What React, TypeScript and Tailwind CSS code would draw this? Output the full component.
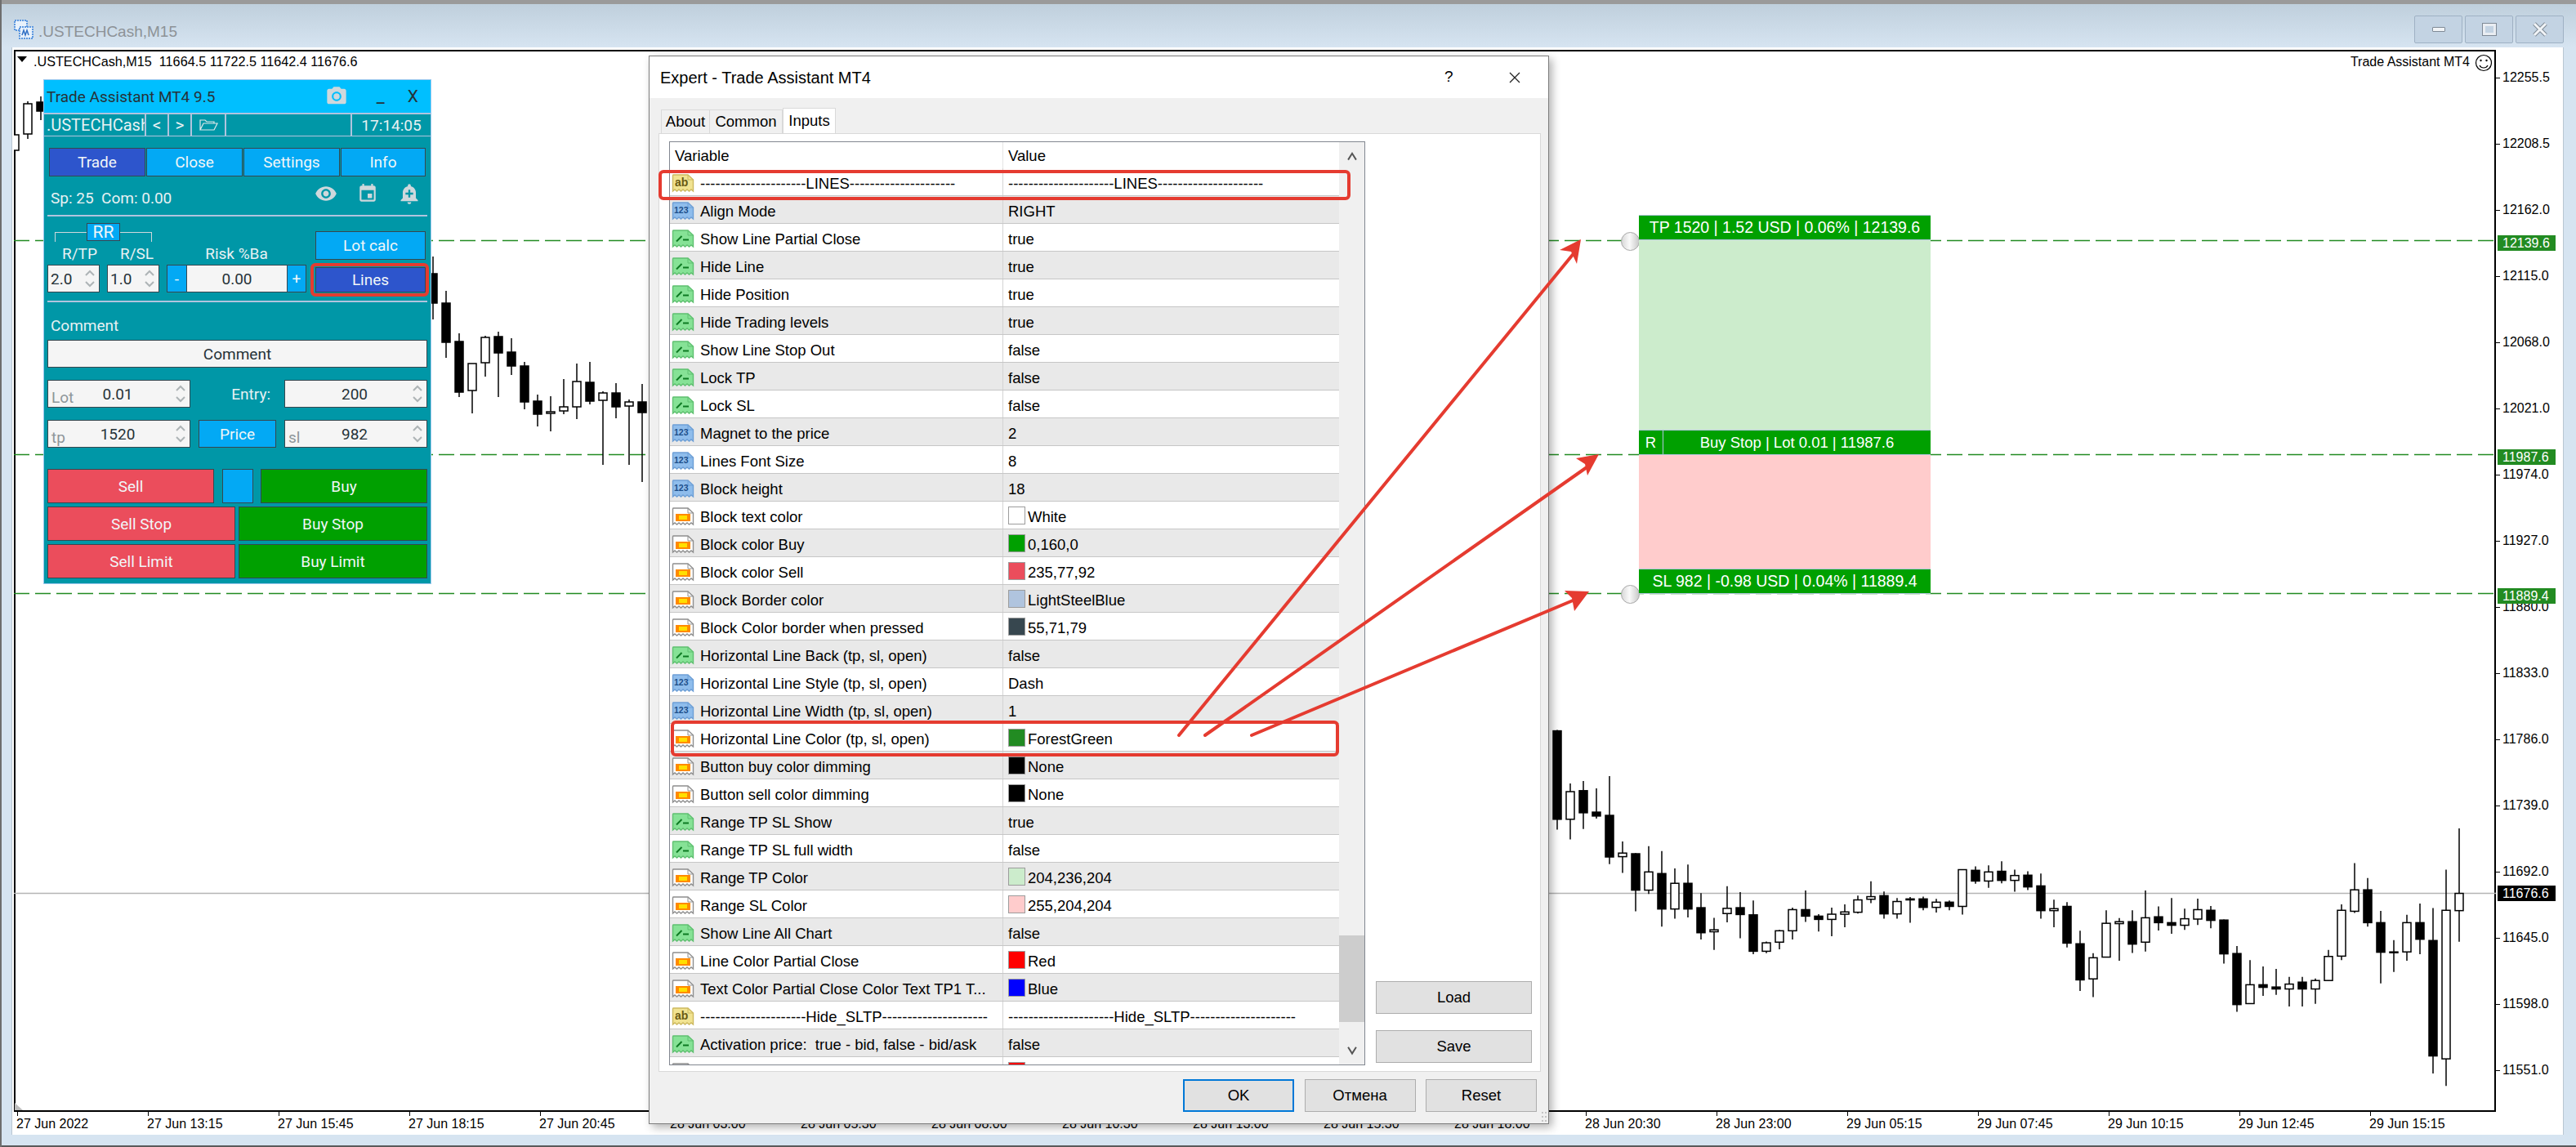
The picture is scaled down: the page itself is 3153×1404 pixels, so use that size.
import type { ReactNode } from 'react'

// candle samples taken from the chart right of the dialog: [isBlack, bodyTop, bodyBottom, wickTop, wickBottom]
const rightCandles: [number, number, number, number, number][] = [
  [1, 288, 560, 285, 592], [0, 475, 560, 450, 622], [1, 472, 540, 442, 590], [1, 538, 550, 465, 558],
  [1, 548, 676, 427, 698], [0, 664, 675, 628, 725], [1, 666, 778, 664, 843], [0, 722, 778, 643, 790],
  [1, 727, 836, 658, 890], [0, 757, 836, 711, 866], [1, 757, 836, 699, 862], [1, 832, 909, 787, 930],
  [0, 900, 906, 863, 962], [0, 834, 850, 766, 877], [1, 832, 853, 784, 926], [1, 854, 966, 810, 975],
  [0, 940, 966, 936, 972], [0, 903, 938, 900, 960], [0, 838, 903, 832, 930], [1, 838, 858, 779, 876],
  [1, 858, 868, 852, 905], [0, 852, 868, 832, 920], [0, 845, 852, 822, 892], [0, 808, 846, 795, 850],
  [0, 798, 806, 751, 818], [1, 795, 851, 782, 866], [0, 813, 851, 802, 866], [1, 805, 808, 799, 878],
  [1, 805, 831, 798, 840], [0, 815, 831, 805, 847], [1, 815, 828, 810, 840], [0, 715, 828, 715, 853],
  [1, 717, 750, 705, 758], [0, 722, 750, 702, 771], [1, 720, 748, 689, 757], [0, 733, 748, 715, 783],
  [1, 732, 768, 720, 778], [1, 765, 841, 727, 866], [0, 835, 841, 807, 892], [1, 828, 941, 815, 954],
  [1, 943, 1054, 903, 1088], [0, 986, 1051, 972, 1107], [0, 880, 984, 840, 985], [0, 875, 881, 864, 995],
  [1, 875, 944, 840, 971], [0, 863, 938, 779, 967], [1, 860, 878, 828, 902], [1, 878, 886, 802, 912],
  [0, 866, 886, 835, 900], [0, 838, 867, 804, 885], [1, 840, 871, 827, 895], [1, 870, 974, 868, 1004],
  [1, 973, 1130, 950, 1152], [0, 1069, 1127, 993, 1127], [1, 1069, 1077, 1013, 1103], [1, 1076, 1082, 1020, 1100],
  [0, 1067, 1082, 1045, 1136], [1, 1061, 1082, 1045, 1136], [0, 1056, 1082, 1050, 1128], [0, 982, 1056, 962, 1058],
  [0, 840, 981, 822, 993], [0, 777, 843, 695, 848], [1, 777, 878, 741, 890], [1, 878, 969, 842, 1065],
  [0, 968, 969, 932, 1030], [0, 878, 968, 854, 995], [1, 878, 929, 819, 975], [1, 933, 1288, 833, 1342],
  [0, 840, 1297, 715, 1380], [0, 788, 841, 588, 937],
]

// [x, isBlack, bodyTop, bodyBottom, wickTop, wickBottom] in page pixels
const leftCandles: [number, number, number, number, number, number][] = [
  [18, 0, 165, 184, 149, 186], [34, 0, 127, 164, 124, 170], [50, 1, 125, 136, 118, 147],
  [530, 1, 335, 371, 314, 391], [546, 1, 371, 419, 356, 438], [562, 1, 418, 480, 408, 486],
  [578, 0, 445, 478, 445, 506], [594, 0, 413, 444, 411, 461], [610, 1, 412, 432, 406, 486],
  [626, 1, 431, 448, 414, 459], [642, 1, 448, 492, 443, 501], [658, 1, 491, 507, 483, 522],
  [674, 0, 504, 506, 485, 528], [690, 0, 498, 503, 464, 507], [706, 0, 467, 498, 445, 513],
  [722, 1, 468, 491, 443, 495], [738, 0, 481, 490, 479, 569], [754, 1, 481, 498, 469, 512],
  [770, 0, 492, 497, 489, 569], [786, 1, 492, 505, 470, 590],
]

const candles = [
  ...leftCandles,
  ...rightCandles.map(
    ([black, bt, bb, wt, wb], i) =>
      [1906 + i * 16, black, 780 + bt / 2.513, 780 + bb / 2.513, 780 + wt / 2.513, 780 + wb / 2.513] as [number, number, number, number, number, number],
  ),
]

const priceTicks = [
  ['12255.5', 95], ['12208.5', 176], ['12162.0', 257], ['12115.0', 338], ['12068.0', 419], ['12021.0', 500],
  ['11974.0', 581], ['11927.0', 662], ['11880.0', 743], ['11833.0', 824], ['11786.0', 905], ['11739.0', 986],
  ['11692.0', 1067], ['11645.0', 1148], ['11598.0', 1229], ['11551.0', 1310],
] as const

const priceTags = [
  { label: '12139.6', top: 288, cls: 'bg-[#228b22]' },
  { label: '11987.6', top: 550, cls: 'bg-[#228b22]' },
  { label: '11889.4', top: 720, cls: 'bg-[#228b22]' },
  { label: '11676.6', top: 1084, cls: 'bg-black' },
]

const timeLabels = [
  '27 Jun 2022', '27 Jun 13:15', '27 Jun 15:45', '27 Jun 18:15', '27 Jun 20:45', '28 Jun 03:00', '28 Jun 05:30',
  '28 Jun 08:00', '28 Jun 10:30', '28 Jun 13:00', '28 Jun 15:30', '28 Jun 18:00', '28 Jun 20:30', '28 Jun 23:00',
  '29 Jun 05:15', '29 Jun 07:45', '29 Jun 10:15', '29 Jun 12:45', '29 Jun 15:15',
]

type IconKind = 'ab' | 'num' | 'bool' | 'color'

const rows: { name: string; value: string; icon: IconKind; swatch?: string }[] = [
  { name: '---------------------LINES---------------------', value: '---------------------LINES---------------------', icon: 'ab' },
  { name: 'Align Mode', value: 'RIGHT', icon: 'num' },
  { name: 'Show Line Partial Close', value: 'true', icon: 'bool' },
  { name: 'Hide Line', value: 'true', icon: 'bool' },
  { name: 'Hide Position', value: 'true', icon: 'bool' },
  { name: 'Hide Trading levels', value: 'true', icon: 'bool' },
  { name: 'Show Line Stop Out', value: 'false', icon: 'bool' },
  { name: 'Lock TP', value: 'false', icon: 'bool' },
  { name: 'Lock SL', value: 'false', icon: 'bool' },
  { name: 'Magnet to the price', value: '2', icon: 'num' },
  { name: 'Lines Font Size', value: '8', icon: 'num' },
  { name: 'Block height', value: '18', icon: 'num' },
  { name: 'Block text color', value: 'White', icon: 'color', swatch: '#ffffff' },
  { name: 'Block color Buy', value: '0,160,0', icon: 'color', swatch: '#00a000' },
  { name: 'Block color Sell', value: '235,77,92', icon: 'color', swatch: '#eb4d5c' },
  { name: 'Block Border color', value: 'LightSteelBlue', icon: 'color', swatch: '#b0c4de' },
  { name: 'Block Color border when pressed', value: '55,71,79', icon: 'color', swatch: '#37474f' },
  { name: 'Horizontal Line Back (tp, sl, open)', value: 'false', icon: 'bool' },
  { name: 'Horizontal Line Style (tp, sl, open)', value: 'Dash', icon: 'num' },
  { name: 'Horizontal Line Width (tp, sl, open)', value: '1', icon: 'num' },
  { name: 'Horizontal Line Color (tp, sl, open)', value: 'ForestGreen', icon: 'color', swatch: '#228b22' },
  { name: 'Button buy color dimming', value: 'None', icon: 'color', swatch: '#000000' },
  { name: 'Button sell color dimming', value: 'None', icon: 'color', swatch: '#000000' },
  { name: 'Range TP SL Show', value: 'true', icon: 'bool' },
  { name: 'Range TP SL full width', value: 'false', icon: 'bool' },
  { name: 'Range TP Color', value: '204,236,204', icon: 'color', swatch: '#ccecCC' },
  { name: 'Range SL Color', value: '255,204,204', icon: 'color', swatch: '#ffcccc' },
  { name: 'Show Line All Chart', value: 'false', icon: 'bool' },
  { name: 'Line Color Partial Close', value: 'Red', icon: 'color', swatch: '#ff0000' },
  { name: 'Text Color Partial Close Color Text TP1 T...', value: 'Blue', icon: 'color', swatch: '#0000ff' },
  { name: '---------------------Hide_SLTP---------------------', value: '---------------------Hide_SLTP---------------------', icon: 'ab' },
  { name: 'Activation price:  true - bid, false - bid/ask', value: 'false', icon: 'bool' },
  { name: '', value: '', icon: 'color', swatch: '#ff0000' },
]

function RowIcon({ kind }: { kind: IconKind }) {
  const page = 'M2 1H20L26.5 7V21L24 19 21.5 21 19 19 16.5 21 14 19 11.5 21 9 19 6.5 21 4 19 1.5 21V2Z'
  const fill = { ab: '#f1e391', num: '#8fbdec', bool: '#86e296', color: '#ffffff' }[kind]
  const stroke = { ab: '#cdb95f', num: '#6d9fd6', bool: '#5fc070', color: '#8f8f8f' }[kind]
  return (
    <svg width="28" height="24" viewBox="0 0 28 24" className="mt-[4px] shrink-0">
      <path d={page} fill={fill} stroke={stroke} strokeWidth="1.4" />
      <path d="M20 1V7H26.5" fill="none" stroke={stroke} strokeWidth="1" />
      {kind === 'ab' && (
        <text x="4" y="14.5" fontSize="14" fontWeight="700" fill="#6a5a14" fontFamily="Liberation Sans, sans-serif">ab</text>
      )}
      {kind === 'num' && (
        <text x="3" y="14" fontSize="10.5" fontWeight="700" fill="#1d4f8a" fontFamily="Liberation Sans, sans-serif">123</text>
      )}
      {kind === 'bool' && <path d="M6 14.5L12.5 8M14 12.5H21" fill="none" stroke="#0d7a22" strokeWidth="2" />}
      {kind === 'color' && (
        <>
          <rect x="5" y="8" width="18" height="9" fill="#ff8a00" />
          <rect x="9" y="10" width="10" height="5" fill="#ffdf00" />
        </>
      )}
    </svg>
  )
}

function GridRow({ row, index }: { row: (typeof rows)[number]; index: number }) {
  return (
    <div className={`flex h-[34px] shrink-0 border-b border-[#c6c6c6] ${index % 2 ? 'bg-[#e9e9e9]' : 'bg-white'}`}>
      <div className="flex w-[408px] items-center gap-[7px] border-r border-[#d4d4d4] pl-[2px] whitespace-pre">
        <RowIcon kind={row.icon} />
        <span className="pt-[4px]">{row.name}</span>
      </div>
      <div className="flex flex-1 items-center pl-[6px] whitespace-pre">
        {row.swatch && (
          <span className="mr-[3px] h-[22px] w-[21px] shrink-0 border border-[#9c9c9c]" style={{ backgroundColor: row.swatch }} />
        )}
        <span className="pt-[4px]">{row.value}</span>
      </div>
    </div>
  )
}

function DialogButton({ children, active }: { children: ReactNode; active?: boolean }) {
  return (
    <div className={`flex h-[40px] w-[136px] items-center justify-center bg-[#e1e1e1] ${active ? 'border-2 border-[#0078d7]' : 'border border-[#adadad]'}`}>
      {children}
    </div>
  )
}

function Dialog() {
  return (
    <div className="absolute top-[68px] left-[794px] flex h-[1308px] w-[1102px] flex-col border border-[#7d7d7d] bg-[#f0f0f0] font-['Liberation_Sans',sans-serif] text-[18.5px] text-black shadow-[4px_4px_10px_rgba(0,0,0,0.3)]">
      <div className="flex h-[51px] items-center bg-white pl-[13px] text-[20px]">
        <span>Expert - Trade Assistant MT4</span>
        <span className="ml-[702px] text-[19px]">?</span>
        <svg width="14" height="14" viewBox="0 0 14 14" className="ml-[69px]">
          <path d="M1 1L13 13M13 1L1 13" stroke="#222" strokeWidth="1.3" />
        </svg>
      </div>
      <div className="flex h-[43px] items-end pl-[14px]">
        <div className="flex h-[29px] w-[60px] items-center justify-center border border-b-0 border-[#d9d9d9]">About</div>
        <div className="flex h-[29px] w-[89px] items-center justify-center border border-b-0 border-l-0 border-[#d9d9d9]">Common</div>
        <div className="flex h-[31px] w-[65px] items-center justify-center border border-b-0 border-[#d9d9d9] bg-white">Inputs</div>
      </div>
      <div className="mr-[9px] ml-[11px] flex h-[1149px] border border-[#d9d9d9] bg-white pt-[9px] pl-[12px]">
        <div className="flex h-[1131px] w-[852px] border border-[#828790]">
          <div className="flex w-[819px] flex-col overflow-hidden">
            <div className="flex h-[32px] shrink-0 bg-white">
              <div className="flex w-[408px] items-center border-r border-[#e5e5e5] pt-[2px] pl-[6px]">Variable</div>
              <div className="flex flex-1 items-center pt-[2px] pl-[6px]">Value</div>
            </div>
            {rows.map((row, i) => (
              <GridRow key={i} row={row} index={i} />
            ))}
          </div>
          <div className="flex flex-1 flex-col items-center bg-[#f0f0f0]">
            <svg width="14" height="36" viewBox="0 0 14 36">
              <path d="M2 22L7 14L12 22" fill="none" stroke="#555" strokeWidth="2" />
            </svg>
            <div className="mt-[936px] h-[107px] w-full bg-[#cdcdcd]" />
            <svg width="14" height="36" viewBox="0 0 14 36" className="mt-[17px]">
              <path d="M2 14L7 22L12 14" fill="none" stroke="#555" strokeWidth="2" />
            </svg>
          </div>
        </div>
        <div className="ml-[13px] flex w-[191px] flex-col justify-end gap-[20px] pb-[10px]">
          <div className="flex h-[40px] items-center justify-center border border-[#adadad] bg-[#e1e1e1]">Load</div>
          <div className="flex h-[40px] items-center justify-center border border-[#adadad] bg-[#e1e1e1]">Save</div>
        </div>
      </div>
      <div className="flex flex-1 items-start justify-end gap-[12.5px] pt-[9px] pr-[14px]">
        <DialogButton active>OK</DialogButton>
        <DialogButton>Отмена</DialogButton>
        <DialogButton>Reset</DialogButton>
      </div>
      <svg width="8" height="14" viewBox="0 0 8 14" className="absolute right-[1px] bottom-[1px]">
        <path d="M1 1h2v2H1zM5 1h2v2H5zM1 6h2v2H1zM5 6h2v2H5zM1 11h2v2H1zM5 11h2v2H5z" fill="#c4c4c4" />
      </svg>
    </div>
  )
}

function Chevrons() {
  return (
    <svg width="14" height="26" viewBox="0 0 14 26" className="shrink-0">
      <path d="M2 9L7 4L12 9M2 17L7 22L12 17" fill="none" stroke="#aeb4b6" strokeWidth="2" />
    </svg>
  )
}

function Spin({ value, hint, className }: { value: string; hint?: string; className: string }) {
  return (
    <div className={`relative flex h-[34px] items-center border border-[#37474f] bg-[#f5f5f5] pr-[4px] text-[#263238] ${className}`}>
      {hint && <span className="absolute bottom-[2px] left-[4px] text-[#8e9699]">{hint}</span>}
      <span className={`flex-1 ${hint !== undefined ? 'pl-[15px] text-center' : 'pl-[3px]'}`}>{value}</span>
      <Chevrons />
    </div>
  )
}

function Btn({ children, className }: { children?: ReactNode; className: string }) {
  return <div className={`flex items-center justify-center border border-[#37474f] text-[#f1f6f8] ${className}`}>{children}</div>
}

function TradePanel() {
  return (
    <div className="absolute top-[97px] left-[53px] flex h-[618px] w-[475px] flex-col border border-[#9cc8ee] bg-[#0097a7] font-['Roboto',sans-serif] text-[19px] leading-none text-[#e8f1f3]">
      <div className="flex h-[40px] shrink-0 items-center bg-[#00bfff] pl-[3px] text-[#263238]">
        <span className="flex-1">Trade Assistant MT4 9.5</span>
        <svg width="28" height="28" viewBox="0 0 24 24" fill="#cfd8dc" className="mr-[35px]">
          <path d="M12 15.2a3.2 3.2 0 1 0 0-6.4 3.2 3.2 0 0 0 0 6.4z" />
          <path d="M9 2L7.17 4H4c-1.1 0-2 .9-2 2v12c0 1.100.9 2 2 2h16c1.100 0 2-.9 2-2V6c0-1.100-.9-2-2-2h-3.170L15 2H9zm3 15c-2.760 0-5-2.240-5-5s2.240-5 5-5 5 2.240 5 5-2.240 5-5 5z" />
        </svg>
        <span className="mr-[27px] w-[11px] text-[22px]">_</span>
        <span className="mr-[15px] text-[21px]">X</span>
      </div>
      <div className="flex h-[29px] shrink-0 border-t-2 border-b border-[#b0c4de]">
        <div className="w-[125px] overflow-hidden border-r-2 border-[#b0c4de] pt-[3px] pl-[3px] text-[20px] whitespace-nowrap">.USTECHCash</div>
        <div className="flex w-[28px] items-center justify-center border-r-2 border-[#b0c4de] text-[21px]">&lt;</div>
        <div className="flex w-[28px] items-center justify-center border-r-2 border-[#b0c4de] text-[21px]">&gt;</div>
        <div className="flex w-[42px] items-center justify-center border-r-2 border-[#b0c4de]">
          <svg width="24" height="16" viewBox="0 0 24 16" fill="none" stroke="#dfe8ea" strokeWidth="1.2">
            <path d="M2 14V2H8L10 4H19V6M2 14L6 6H23L19 14Z" />
          </svg>
        </div>
        <div className="w-[154px] border-r-2 border-[#b0c4de]" />
        <div className="flex flex-1 items-center justify-center">17:14:05</div>
      </div>
      <div className="mt-[14px] flex gap-px pl-[6px]">
        <Btn className="h-[35px] w-[118px] bg-[#2d55cc]">Trade</Btn>
        <Btn className="h-[35px] w-[118px] bg-[#03a9f4]">Close</Btn>
        <Btn className="h-[35px] w-[118px] bg-[#03a9f4]">Settings</Btn>
        <Btn className="h-[35px] w-[104px] bg-[#03a9f4]">Info</Btn>
      </div>
      <div className="flex h-[47px] shrink-0 items-center pr-[12px] pl-[8px]">
        <span className="pt-[5px] whitespace-pre">Sp: 25  Com: 0.00</span>
        <div className="ml-auto flex items-center gap-[24px] pb-[6px]">
          <svg width="28" height="28" viewBox="0 0 24 24" fill="#cfd8dc">
            <path d="M12 4.500C7 4.500 2.730 7.610 1 12c1.730 4.390 6 7.500 11 7.500s9.270-3.110 11-7.500c-1.730-4.390-6-7.500-11-7.500zM12 17c-2.760 0-5-2.240-5-5s2.240-5 5-5 5 2.240 5 5-2.240 5-5 5zm0-8c-1.660 0-3 1.340-3 3s1.340 3 3 3 3-1.340 3-3-1.340-3-3-3z" />
          </svg>
          <svg width="26" height="26" viewBox="0 0 24 24" fill="#cfd8dc">
            <path d="M17 12h-5v5h5v-5zM16 1v2H8V1H6v2H5c-1.110 0-1.990.9-1.990 2L3 19c0 1.100.89 2 2 2h14c1.100 0 2-.9 2-2V5c0-1.100-.9-2-2-2h-1V1h-2zm3 18H5V8h14v11z" />
          </svg>
          <svg width="28" height="28" viewBox="0 0 24 24" fill="#cfd8dc">
            <path d="M10.010 21.010c0 1.100.89 1.990 1.990 1.990s1.990-.89 1.990-1.990h-3.980zm8.870-4.190V11c0-3.250-2.250-5.970-5.290-6.690v-.72C13.590 2.710 12.880 2 12 2s-1.590.71-1.590 1.590v.72C7.370 5.030 5.120 7.750 5.120 11v5.820L3 18.940V20h18v-1.060l-2.120-2.120zM16 13.010h-3v3h-2v-3H8V11h3V8h2v3h3v2.010z" />
          </svg>
        </div>
      </div>
      <div className="mx-[4px] h-[2px] shrink-0 bg-[#b0c4de]" />
      <div className="flex h-[103px] shrink-0 px-[4px]">
        <div className="w-[317px] pt-[8px]">
          <div className="flex h-[24px] pl-[9px]">
            <div className="mt-[11px] h-[12px] w-[39px] border-t border-l border-[#cfd8dc]" />
            <Btn className="h-[22px] w-[41px] bg-[#03a9f4] text-[21px]">RR</Btn>
            <div className="mt-[11px] h-[12px] w-[39px] border-t border-r border-[#cfd8dc]" />
          </div>
          <div className="flex h-[27px] items-center">
            <span className="w-[73px] pl-[6px] text-center">R/TP</span>
            <span className="w-[73px] text-center">R/SL</span>
            <span className="w-[171px] text-center">Risk %Ba</span>
          </div>
          <div className="flex gap-[9px]">
            <Spin value="2.0" className="w-[64px]" />
            <Spin value="1.0" className="w-[64px]" />
            <div className="flex h-[34px] w-[171px]">
              <Btn className="w-[25px] bg-[#03a9f4]">-</Btn>
              <div className="flex w-[122px] items-center justify-center border-y border-[#37474f] bg-[#f5f5f5] text-[#263238]">0.00</div>
              <Btn className="w-[24px] bg-[#03a9f4]">+</Btn>
            </div>
          </div>
        </div>
        <div className="ml-[11px] flex w-[135px] flex-col pt-[18px]">
          <Btn className="h-[35px] bg-[#03a9f4]">Lot calc</Btn>
          <Btn className="mt-[9px] h-[31px] bg-[#2d55cc]">Lines</Btn>
        </div>
      </div>
      <div className="mx-[4px] h-[2px] shrink-0 bg-[#b0c4de]" />
      <div className="flex h-[46px] shrink-0 items-end px-[8px] pb-[8px]">Comment</div>
      <div className="mx-[4px] flex flex-col gap-[15px]">
        <div className="flex h-[34px] items-center justify-center border border-[#37474f] bg-[#f5f5f5] text-[#263238]">Comment</div>
        <div className="flex items-center">
          <Spin hint="Lot" value="0.01" className="w-[175px]" />
          <span className="w-[115px] pr-[17px] text-right">Entry:</span>
          <Spin hint="" value="200" className="w-[175px]" />
        </div>
        <div className="flex items-center">
          <Spin hint="tp" value="1520" className="w-[175px]" />
          <Btn className="mx-[10px] h-[34px] w-[95px] bg-[#03a9f4]">Price</Btn>
          <Spin hint="sl" value="982" className="w-[175px]" />
        </div>
      </div>
      <div className="mx-[4px] mt-[26px] flex flex-col gap-[4px]">
        <div className="flex justify-between">
          <Btn className="h-[42px] w-[204px] bg-[#eb4d5c]">Sell</Btn>
          <Btn className="h-[42px] w-[38px] bg-[#03a9f4]" />
          <Btn className="h-[42px] w-[204px] bg-[#00a000]">Buy</Btn>
        </div>
        <div className="flex justify-between">
          <Btn className="h-[42px] w-[230px] bg-[#eb4d5c]">Sell Stop</Btn>
          <Btn className="h-[42px] w-[231px] bg-[#00a000]">Buy Stop</Btn>
        </div>
        <div className="flex justify-between">
          <Btn className="h-[42px] w-[230px] bg-[#eb4d5c]">Sell Limit</Btn>
          <Btn className="h-[42px] w-[231px] bg-[#00a000]">Buy Limit</Btn>
        </div>
      </div>
    </div>
  )
}

function LineBlock({ children, className }: { children: ReactNode; className: string }) {
  return (
    <div className={`flex items-center justify-center border-y border-[#b0c4de] bg-[#00a000] text-[19.5px] text-white ${className}`}>
      {children}
    </div>
  )
}

function Handle({ top }: { top: string }) {
  return (
    <div className={`absolute left-[1984px] h-[23px] w-[23px] rounded-full border border-[#a8a8a8] bg-[linear-gradient(90deg,#d8d8d8,#fafafa_45%,#c9c9c9)] ${top}`} />
  )
}

function TradeLevels() {
  return (
    <>
      <Handle top="top-[284px]" />
      <Handle top="top-[716px]" />
      <div className="absolute top-[263px] left-[2006px] flex w-[357px] flex-col font-['Liberation_Sans',sans-serif]">
        <LineBlock className="h-[31px]">TP 1520 | 1.52 USD | 0.06% | 12139.6</LineBlock>
        <div className="h-[232px] bg-[#ccecCC]" />
        <div className="flex h-[31px] border-y border-[#b0c4de] bg-[#00a000] text-[18.5px] text-white">
          <div className="flex w-[30px] items-center justify-center border-r border-[#b0c4de]">R</div>
          <div className="flex flex-1 items-center justify-center">Buy Stop | Lot 0.01 | 11987.6</div>
        </div>
        <div className="h-[139px] bg-[#ffcccc]" />
        <LineBlock className="h-[31px]">SL 982 | -0.98 USD | 0.04% | 11889.4</LineBlock>
      </div>
    </>
  )
}

function Plot() {
  return (
    <div className="relative w-[3038px] border-2 border-black">
      <svg width="3038" height="1300" viewBox="17 61 3038 1300" className="absolute -top-[2px] -left-[2px]">
        {[294.5, 556.5, 726.5].map((y) => (
          <line key={y} x1="17" x2="3055" y1={y} y2={y} stroke="#228b22" strokeWidth="1.5" strokeDasharray="19 7" />
        ))}
        <line x1="17" x2="3055" y1="1093.500" y2="1093.500" stroke="#b4b4b4" strokeWidth="1.500" />
        {candles.map(([x, black, bt, bb, wt, wb]) => (
          <g key={x}>
            <line x1={x} x2={x} y1={wt} y2={wb} stroke="#000" strokeWidth="1.500" />
            <rect x={x - 5} y={bt} width="10" height={Math.max(bb - bt, 1)} fill={black ? '#000' : '#fff'} stroke="#000" strokeWidth="1.500" />
          </g>
        ))}
        <path d="M21 69H33L27 76Z" fill="#000" />
        <path d="M18 1350L28 1359H18Z" fill="#bdbdbd" />
        <g fill="none" stroke="#000" strokeWidth="1.200">
          <circle cx="3040" cy="77" r="9.500" />
          <path d="M3035 80c2 4 8 4 10 0" />
        </g>
        <circle cx="3036.500" cy="74" r="1.200" fill="#000" />
        <circle cx="3043.500" cy="74" r="1.200" fill="#000" />
      </svg>
      <div className="absolute top-[2px] left-[22px] text-[16.2px] leading-[20px] whitespace-pre text-black">
        .USTECHCash,M15  11664.5 11722.5 11642.4 11676.6
      </div>
      <div className="absolute top-[3px] right-[30px] text-[16px] leading-[20px] text-black">Trade Assistant MT4</div>
    </div>
  )
}

function PriceAxis() {
  return (
    <div className="relative flex-1 text-[16px] leading-none text-black">
      {priceTicks.map(([label, y]) => (
        <div key={label} className="absolute left-0 flex -translate-y-1/2 items-center" style={{ top: y - 61 }}>
          <div className="h-px w-[5px] bg-black" />
          <span className="ml-[3px]">{label}</span>
        </div>
      ))}
      {priceTags.map((t) => (
        <div key={t.label} className={`absolute left-[2px] flex h-[19px] w-[71px] items-center pl-[6px] text-white ${t.cls}`} style={{ top: t.top - 61 }}>
          {t.label}
        </div>
      ))}
    </div>
  )
}

function TimeAxis() {
  return (
    <div className="relative h-[28px] text-[16px] leading-none text-black">
      {timeLabels.map((label, i) => (
        <div key={label} className="absolute top-0" style={{ left: 3 + i * 160 }}>
          <div className="ml-px h-[5px] w-px bg-black" />
          <div className="mt-[2px] whitespace-nowrap">{label}</div>
        </div>
      ))}
    </div>
  )
}

function WindowButton({ children }: { children: ReactNode }) {
  return (
    <div className="flex h-[34px] w-[59px] items-center justify-center rounded-[2px] border border-[#9fb1c4] bg-[#c3d3e3]">{children}</div>
  )
}

function ChartWindow() {
  return (
    <div className="flex h-[1404px] w-[3153px] flex-col border-l-2 border-[#6e6e6e] bg-[#d6e4f1] font-['Liberation_Sans',sans-serif]">
      <div className="h-[5px] bg-[#9a9a9a]" />
      <div className="flex h-[53px] bg-[linear-gradient(#bfcfdc,#d6e4f1)] pl-[15px]">
        <svg width="24" height="24" viewBox="0 0 24 24" className="mt-[19px]">
          <rect x="1" y="1" width="15" height="12" fill="#e8f1fb" stroke="#5b97e0" strokeWidth="2" strokeDasharray="2 1" />
          <rect x="7" y="9" width="16" height="14" fill="#e8f1fb" stroke="#5b97e0" strokeWidth="2" strokeDasharray="2 1" />
          <path d="M10 19L12 13L14 19L16 13L18 19" fill="none" stroke="#2f6fc4" strokeWidth="1.500" />
        </svg>
        <span className="ml-[6px] pt-[24px] text-[19px] leading-[20px] text-[#8d9297]">.USTECHCash,M15</span>
        <div className="mt-[14px] ml-auto flex gap-[3px] pr-[15px]">
          <WindowButton>
            <div className="h-[6px] w-[16px] rounded-[1px] border border-[#7f8a96] bg-[#f1f4f7]" />
          </WindowButton>
          <WindowButton>
            <div className="h-[14px] w-[16px] border-[3px] border-[#e9edf2] outline outline-[#7f8a96]" />
          </WindowButton>
          <WindowButton>
            <svg width="20" height="18" viewBox="0 0 20 18">
              <path d="M3 2L17 16M17 2L3 16" stroke="#7f8a96" strokeWidth="5" />
              <path d="M3 2L17 16M17 2L3 16" stroke="#f1f4f7" strokeWidth="3" />
            </svg>
          </WindowButton>
        </div>
      </div>
      <div className="ml-[12px] flex h-[1331px] w-[3124px] flex-col border-x border-[#b9c6d2] bg-white pt-[3px] pl-[2px]">
        <div className="flex h-[1300px]">
          <Plot />
          <PriceAxis />
        </div>
        <TimeAxis />
      </div>
      <div className="mt-auto h-[2px] bg-[#5a5a5a]" />
    </div>
  )
}

function Annotations() {
  const arrows = [
    { from: [1443, 900], to: [1928, 308], head: '1935,293 1909,306 1923,308 1930,323' },
    { from: [1475, 900], to: [1945, 570], head: '1957,556 1929,561 1940,568 1943,582' },
    { from: [1532, 900], to: [1930, 733], head: '1945,724 1915,723 1924,732 1927,748' },
  ]
  return (
    <>
      <div className="absolute top-[322px] left-[380px] h-[41px] w-[145px] rounded-[6px] border-4 border-[#e53b30]" />
      <div className="absolute top-[208px] left-[806px] h-[37px] w-[847px] rounded-[6px] border-4 border-[#e53b30]" />
      <div className="absolute top-[882px] left-[821px] h-[44px] w-[818px] rounded-[6px] border-4 border-[#e53b30]" />
      <svg width="3153" height="1404" viewBox="0 0 3153 1404" className="pointer-events-none absolute inset-0">
        {arrows.map((a) => (
          <g key={a.head}>
            <line x1={a.from[0]} y1={a.from[1]} x2={a.to[0]} y2={a.to[1]} stroke="#e53b30" strokeWidth="4" strokeLinecap="round" />
            <polygon points={a.head} fill="#e53b30" />
          </g>
        ))}
      </svg>
    </>
  )
}

export default function App() {
  return (
    <div className="relative h-[1404px] w-[3153px] overflow-hidden">
      <ChartWindow />
      <TradeLevels />
      <TradePanel />
      <Dialog />
      <Annotations />
    </div>
  )
}
